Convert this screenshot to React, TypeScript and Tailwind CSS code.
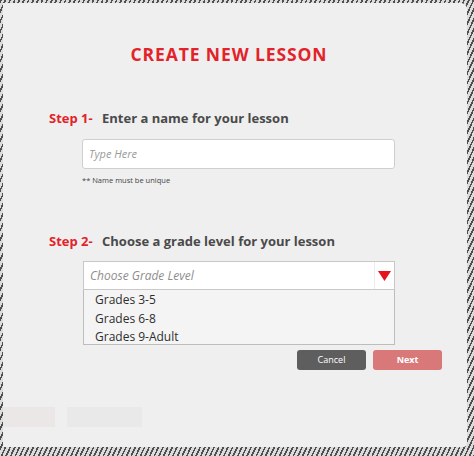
const grades = ['Grades 3-5', 'Grades 6-8', 'Grades 9-Adult']

function StepLabel({ step, text }: { step: string; text: string }) {
  return (
    <div className="flex items-center pl-[46px] text-[13px] font-bold leading-[18px]">
      <span className="w-[53px] text-[#e3222a]">{step}</span>
      <span className="text-[#4a4a4a]">{text}</span>
    </div>
  )
}

function CaretDown() {
  return (
    <svg width="13" height="10" viewBox="0 0 13 10" aria-hidden="true">
      <path d="M0 0 H13 L6.5 10 Z" fill="#e3141c" />
    </svg>
  )
}

export default function App() {
  return (
    <div
      className="w-[474px] h-[456px] pt-[3px] pl-[3px] pr-[7px] pb-[9px] bg-[repeating-linear-gradient(115deg,#4f4f4f_0px,#4f4f4f_1.6px,#dcdcdc_1.6px,#dcdcdc_4.2px)]"
      style={{ fontFamily: '"Open Sans", "Liberation Sans", sans-serif' }}
    >
      <div className="h-full bg-[#efefef] rounded-tr-[6px] rounded-br-[4px] flex flex-col">
        {/* Header */}
        <h1 className="pt-[39px] pr-[12px] text-center text-[17.5px] leading-[24px] font-bold tracking-[0.9px] text-[#e3222a]">
          CREATE NEW LESSON
        </h1>

        {/* Step 1: lesson name */}
        <div className="mt-[43px]">
          <StepLabel step="Step 1-" text="Enter a name for your lesson" />
          <div className="ml-[79px] mt-[12px] w-[313px]">
            <div className="h-[30px] bg-white border border-[#cfcfcf] rounded-[3px] flex items-center px-[6px]">
              <span className="italic text-[11px] text-[#9a9a9a]">Type Here</span>
            </div>
            <p className="mt-[6px] text-[7.5px] leading-[10px] text-[#444]">** Name must be unique</p>
          </div>
        </div>

        {/* Step 2: grade level */}
        <div className="mt-[47px]">
          <StepLabel step="Step 2-" text="Choose a grade level for your lesson" />
          <div className="ml-[80px] mt-[11px] w-[312px]">
            <div className="h-[29px] bg-white border border-[#c8c8c8] flex items-center">
              <span className="flex-1 pl-[6px] italic text-[12px] text-[#8e8e8e]">Choose Grade Level</span>
              <div className="h-full w-[20px] border-l border-[#ececec] flex items-center justify-center">
                <CaretDown />
              </div>
            </div>
            <ul className="h-[55px] bg-[#f4f4f4] border border-t-0 border-[#bdbdbd] pl-[11px] pt-[1px]">
              {grades.map((g) => (
                <li key={g} className="text-[12px] leading-[18.5px] text-[#2e2e2e]">
                  {g}
                </li>
              ))}
            </ul>
          </div>
        </div>

        {/* Actions */}
        <div className="mt-[5px] flex justify-end gap-[7px] pr-[25px]">
          <button className="w-[69px] h-[20px] rounded-[3px] bg-[#5e5e5e] text-white text-[9px]">Cancel</button>
          <button className="w-[69px] h-[20px] rounded-[3px] bg-[#d97878] text-white text-[9px] font-bold">Next</button>
        </div>

        {/* Faded page content behind the dialog */}
        <div className="mt-[37px] flex gap-[12px]">
          <div className="w-[52px] h-[20px] bg-[#ece7e7]" />
          <div className="w-[75px] h-[20px] bg-[#e9e9e9]" />
        </div>
      </div>
    </div>
  )
}
